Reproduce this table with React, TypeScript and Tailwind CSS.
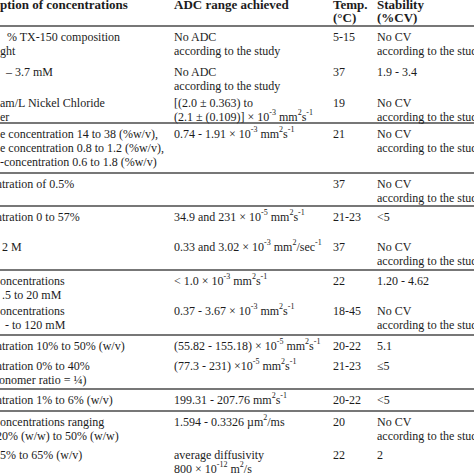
type Seg = string | { sup: string };
type Line = { t: Seg[]; ml?: string };
type Row = {
  h: string;
  line?: boolean;
  desc: Line[];
  adc: Line[];
  temp: string;
  stab: string[];
};

const sp = (s: string) => ({ sup: s });

const ACC = "according to the study";

const rows: Row[] = [
  {
    h: "h-[36px]",
    line: true,
    desc: [{ t: ["% TX-150 composition"], ml: "ml-[7px]" }, { t: ["ght"] }],
    adc: [{ t: ["No ADC"] }, { t: [ACC] }],
    temp: "5-15",
    stab: ["No CV", ACC],
  },
  {
    h: "h-[31px]",
    desc: [{ t: ["– 3.7 mM"], ml: "ml-[6px]" }],
    adc: [{ t: ["No ADC"] }, { t: [ACC] }],
    temp: "37",
    stab: ["1.9 - 3.4"],
  },
  {
    h: "h-[30px]",
    desc: [{ t: ["am/L Nickel Chloride"] }, { t: ["er"] }],
    adc: [
      { t: ["[(2.0 ± 0.363) to"] },
      { t: ["(2.1 ± (0.109)] × 10", sp("-3"), " mm", sp("2"), "s", sp("-1")] },
    ],
    temp: "19",
    stab: ["No CV", ACC],
  },
  {
    h: "h-[50px]",
    line: true,
    desc: [
      { t: ["e concentration 14 to 38 (%w/v),"] },
      { t: ["e concentration 0.8 to 1.2 (%w/v),"] },
      { t: ["-concentration 0.6 to 1.8 (%w/v)"] },
    ],
    adc: [{ t: ["0.74 - 1.91 × 10", sp("-3"), " mm", sp("2"), "s", sp("-1")] }],
    temp: "21",
    stab: ["No CV", ACC],
  },
  {
    h: "h-[33px]",
    line: true,
    desc: [{ t: ["ntration of 0.5%"], ml: "-ml-[4px]" }],
    adc: [],
    temp: "37",
    stab: ["No CV", ACC],
  },
  {
    h: "h-[31px]",
    line: true,
    desc: [{ t: ["ntration 0 to 57%"], ml: "-ml-[4px]" }],
    adc: [{ t: ["34.9 and 231 × 10", sp("-5"), " mm", sp("2"), "s", sp("-1")] }],
    temp: "21-23",
    stab: ["<5"],
  },
  {
    h: "h-[33px]",
    desc: [{ t: ["2 M"], ml: "ml-[2px]" }],
    adc: [{ t: ["0.33 and 3.02 × 10", sp("-3"), " mm", sp("2"), "/sec", sp("-1")] }],
    temp: "37",
    stab: ["No CV", ACC],
  },
  {
    h: "h-[31px]",
    line: true,
    desc: [{ t: ["oncentrations"] }, { t: [".5 to 20 mM"], ml: "ml-[2px]" }],
    adc: [{ t: ["< 1.0 × 10", sp("-3"), " mm", sp("2"), "s", sp("-1")] }],
    temp: "22",
    stab: ["1.20 - 4.62"],
  },
  {
    h: "h-[34px]",
    desc: [{ t: ["oncentrations"] }, { t: ["- to 120 mM"], ml: "ml-[5px]" }],
    adc: [{ t: ["0.37 - 3.67 × 10", sp("-3"), " mm", sp("2"), "s", sp("-1")] }],
    temp: "18-45",
    stab: ["No CV", ACC],
  },
  {
    h: "h-[21px]",
    line: true,
    desc: [{ t: ["ntration 10% to 50% (w/v)"], ml: "-ml-[4px]" }],
    adc: [{ t: ["(55.82 - 155.18) × 10", sp("-5"), " mm", sp("2"), "s", sp("-1")] }],
    temp: "20-22",
    stab: ["5.1"],
  },
  {
    h: "h-[33px]",
    desc: [{ t: ["ntration 0% to 40%"], ml: "-ml-[4px]" }, { t: ["onomer ratio = ¼)"], ml: "-ml-[1px]" }],
    adc: [{ t: ["(77.3 - 231) ×10", sp("-5"), " mm", sp("2"), "s", sp("-1")] }],
    temp: "21-23",
    stab: ["≤5"],
  },
  {
    h: "h-[22px]",
    line: true,
    desc: [{ t: ["ntration 1% to 6% (w/v)"], ml: "-ml-[4px]" }],
    adc: [{ t: ["199.31 - 207.76 mm", sp("2"), "s", sp("-1")] }],
    temp: "20-22",
    stab: ["<5"],
  },
  {
    h: "h-[34px]",
    line: true,
    desc: [{ t: ["oncentrations ranging"] }, { t: ["20% (w/w) to 50% (w/w)"], ml: "-ml-[4px]" }],
    adc: [{ t: ["1.594 - 0.3326 µm", sp("2"), "/ms"] }],
    temp: "20",
    stab: ["No CV", ACC],
  },
  {
    h: "h-[40px]",
    desc: [{ t: ["5% to 65% (w/v)"] }],
    adc: [{ t: ["average diffusivity"] }, { t: ["800 × 10", sp("-12"), " m", sp("2"), "/s"] }],
    temp: "22",
    stab: ["2"],
  },
];

function Text({ line }: { line: Line }) {
  return (
    <div className={`whitespace-nowrap ${line.ml ?? ""}`}>
      {line.t.map((s, i) =>
        typeof s === "string" ? (
          <span key={i}>{s}</span>
        ) : (
          <sup key={i} className="relative -top-[1px] align-super text-[8px] leading-none">
            {s.sup}
          </sup>
        ),
      )}
    </div>
  );
}

export default function App() {
  return (
    <div
      className="h-[474px] w-[474px] overflow-hidden bg-white text-[#1c1c1c]"
      style={{ fontFamily: '"Liberation Serif", "Times New Roman", serif' }}
    >
      <div className="-mt-[2px] grid h-[27px] grid-cols-[174px_159px_42px_99px] text-[13px] font-bold leading-[13px]">
        <div className="whitespace-nowrap">ption of concentrations</div>
        <div className="whitespace-nowrap">ADC range achieved</div>
        <div className="whitespace-nowrap">
          <div>Temp.</div>
          <div>(°C)</div>
        </div>
        <div className="whitespace-nowrap pl-[2px]">
          <div>Stability</div>
          <div>(%CV)</div>
        </div>
      </div>

      {rows.map((r, i) => (
        <div
          key={i}
          className={`grid grid-cols-[174px_159px_42px_99px] text-[12px] leading-[14px] ${r.h} ${
            r.line ? "border-t-2 border-[#777777] pt-[3px]" : "pt-[4px]"
          }`}
        >
          <div>
            {r.desc.map((l, j) => (
              <Text key={j} line={l} />
            ))}
          </div>
          <div>
            {r.adc.map((l, j) => (
              <Text key={j} line={l} />
            ))}
          </div>
          <div className="whitespace-nowrap">{r.temp}</div>
          <div className="whitespace-nowrap pl-[2px]">
            {r.stab.map((s, j) => (
              <div key={j}>{s}</div>
            ))}
          </div>
        </div>
      ))}
    </div>
  );
}
